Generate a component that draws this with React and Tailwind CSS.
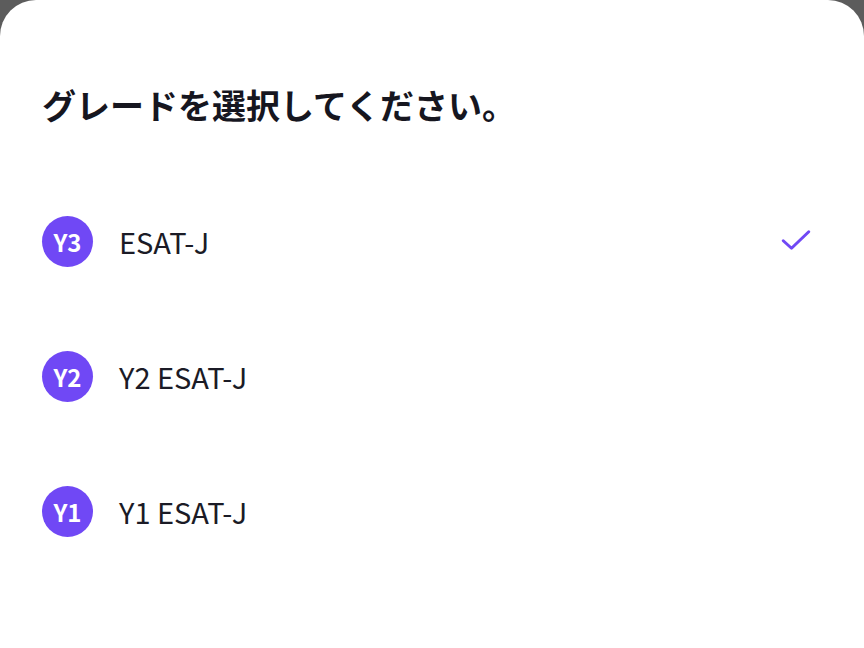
import React from 'react';

const GRADES = [
  { code: 'Y3', label: 'ESAT-J', selected: true },
  { code: 'Y2', label: 'Y2 ESAT-J' },
  { code: 'Y1', label: 'Y1 ESAT-J' },
];

function CheckIcon() {
  return (
    <svg width="36" height="36" viewBox="0 0 24 24" fill="none" stroke="#7048f5" strokeWidth="2" strokeLinecap="round" strokeLinejoin="round">
      <path d="M3.5 12.5l5.5 5L20.5 6.5" />
    </svg>
  );
}

export default function App() {
  return (
    <div className="w-[864px] h-[648px] bg-[#5c5c5c] overflow-hidden" style={{ fontFamily: '"Noto Sans CJK JP", "Noto Sans", sans-serif' }}>
      <div className="h-full bg-white rounded-t-[36px] pt-[84px] px-[42px]">
        <h1 className="text-[34px] leading-[42px] font-bold text-[#16161f]">
          グレードを選択してください。
        </h1>
        <ul className="mt-[90px] flex flex-col gap-[84px]">
          {GRADES.map((g) => (
            <li key={g.code} className="flex items-center h-[51px]">
              <div className="w-[51px] h-[51px] rounded-full bg-[#7048f5] flex items-center justify-center text-white text-[24px] leading-none font-bold">
                {g.code}
              </div>
              <span className="ml-[26px] text-[29px] leading-none text-[#1b1b26]">{g.label}</span>
              {g.selected && (
                <div className="ml-auto mr-[8px] -mt-[3px]">
                  <CheckIcon />
                </div>
              )}
            </li>
          ))}
        </ul>
      </div>
    </div>
  );
}
